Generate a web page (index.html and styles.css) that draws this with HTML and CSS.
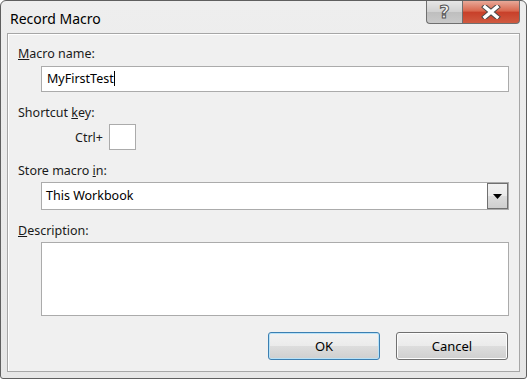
FILE: index.html
```html
<!DOCTYPE html>
<html lang="en">
<head>
    <meta charset="UTF-8">
    <title>Record Macro</title>
    <link rel="stylesheet" href="styles.css">
</head>
<body>
    <div class="window">
        <div class="titlebar">
            <span class="title">Record Macro</span>
            <div class="controls">
                <div class="help-btn"><span>?</span></div>
                <div class="close-btn">
                    <svg width="22" height="14" viewBox="0 0 22 14">
                        <path d="M5 2 L17 12 M17 2 L5 12" stroke="#4a4a4a" stroke-width="5.5" stroke-linecap="square"/>
                        <path d="M5 2 L17 12 M17 2 L5 12" stroke="#fff" stroke-width="3.5" stroke-linecap="square"/>
                    </svg>
                </div>
            </div>
        </div>

        <div class="client">
            <div class="label"><u>M</u>acro name:</div>
            <div class="field text-field">MyFirstTest<span class="caret"></span></div>

            <div class="label gap">Shortcut <u>k</u>ey:</div>
            <div class="shortcut-row">
                <span>Ctrl+</span>
                <div class="key-box"></div>
            </div>

            <div class="label gap">Store macro <u>i</u>n:</div>
            <div class="field select-field">
                <span class="select-value">This Workbook</span>
                <div class="drop-btn">
                    <svg width="9" height="5" viewBox="0 0 9 5"><path d="M0 0 H9 L4.5 5 Z" fill="#000"/></svg>
                </div>
            </div>

            <div class="label gap"><u>D</u>escription:</div>
            <div class="field desc-field"></div>

            <div class="actions">
                <button class="btn btn-default">OK</button>
                <button class="btn">Cancel</button>
            </div>
        </div>
    </div>
</body>
</html>
```

FILE: styles.css
```css
html, body {
    margin: 0;
    padding: 0;
    background: #ffffff;
}
body {
    font-family: 'Noto Sans', 'Open Sans', sans-serif;
    font-size: 12.5px;
    color: #1a1a1a;
}
.window {
    width: 527px;
    height: 379px;
    box-sizing: border-box;
    border: 1px solid #5f5f5f;
    border-radius: 6px 6px 3px 3px;
    background: linear-gradient(#eeeeee, #e6e6e6);
    padding: 0 6px 6px 6px;
    display: flex;
    flex-direction: column;
}
.titlebar {
    height: 32px;
    display: flex;
    align-items: flex-start;
}
.title {
    font-size: 14px;
    margin: 8px 0 0 3px;
    color: #000;
}
.controls {
    margin-left: auto;
    display: flex;
}
.help-btn,
.close-btn {
    height: 23px;
    box-sizing: border-box;
    border: 1px solid #6f6f6f;
    border-top: none;
    display: flex;
    align-items: center;
    justify-content: center;
}
.help-btn {
    width: 36px;
    border-right: none;
    border-radius: 0 0 0 4px;
    background: linear-gradient(#e6e6e6, #d0d0d0 50%, #bebebe 51%, #c9c9c9);
}
.help-btn span {
    font-family: 'DejaVu Sans', sans-serif;
    font-weight: bold;
    font-size: 18px;
    color: #f4f4f4;
    -webkit-text-stroke: 1px #555;
    line-height: 1;
}
.close-btn {
    width: 58px;
    border-radius: 0 0 4px 0;
    background: linear-gradient(#e8a898, #d9684f 45%, #c8402a 52%, #d05a40);
}
.client {
    flex: 1;
    border: 1px solid #a6a6a6;
    box-shadow: inset 1px 1px 0 #ffffff;
    background: #f0f0f0;
    padding: 12px 9px 9px 10px;
    display: flex;
    flex-direction: column;
}
.label {
    line-height: 16px;
}
.label.gap {
    margin-top: 13px;
}
.field {
    margin: 4px 0 0 23px;
    width: 468px;
    box-sizing: border-box;
    border: 1px solid #ababab;
    background: #fff;
}
.text-field {
    height: 26px;
    line-height: 24px;
    padding-left: 5px;
    font-size: 12.5px;
    color: #000;
}
.caret {
    display: inline-block;
    width: 1px;
    height: 15px;
    background: #000;
    vertical-align: -3px;
}
.shortcut-row {
    margin: 3px 0 0 57px;
    display: flex;
    align-items: center;
    gap: 6px;
}
.key-box {
    width: 27px;
    height: 26px;
    box-sizing: border-box;
    border: 1px solid #ababab;
    background: #fff;
}
.select-field {
    margin-top: 3px;
    height: 28px;
    display: flex;
    align-items: stretch;
}
.select-value {
    flex: 1;
    line-height: 26px;
    padding-left: 4px;
    font-size: 12.5px;
    color: #000;
}
.drop-btn {
    width: 21px;
    box-sizing: border-box;
    border: 1px solid #707070;
    background: linear-gradient(#f2f2f2, #ebebeb 50%, #dddddd 51%, #cfcfcf);
    display: flex;
    align-items: center;
    justify-content: center;
}
.desc-field {
    margin-top: 3px;
    height: 74px;
}
.actions {
    margin-top: 16px;
    display: flex;
    justify-content: flex-end;
    gap: 16px;
    padding-right: 2px;
}
.btn {
    width: 112px;
    height: 28px;
    box-sizing: border-box;
    border: 1px solid #707070;
    border-radius: 3px;
    background: linear-gradient(#f2f2f2, #ebebeb 50%, #dddddd 51%, #cfcfcf);
    box-shadow: inset 0 0 0 1px #fcfcfc;
    font-family: 'Noto Sans', 'Open Sans', sans-serif;
    font-size: 13px;
    color: #000;
    padding: 0;
}
.btn-default {
    border-color: #3c7fb1;
    box-shadow: inset 0 0 0 1px #b8e2f8;
}
```
